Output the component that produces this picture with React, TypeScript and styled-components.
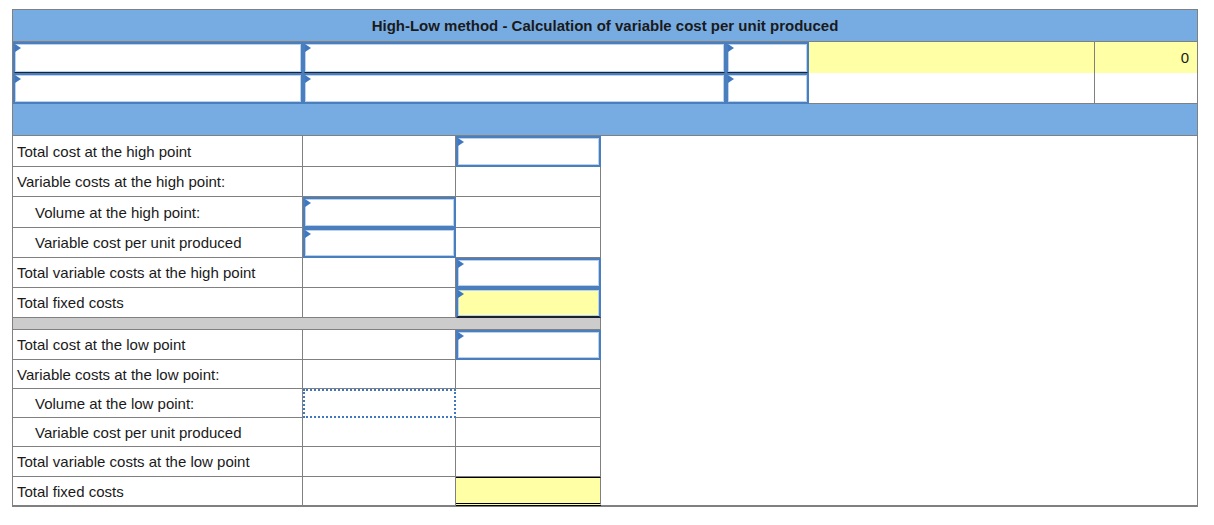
import React from "react";
import styled, { createGlobalStyle, css } from "styled-components";

const Global = createGlobalStyle`
  body { margin: 0; background: #fff; font-family: "Liberation Sans", Arial, sans-serif; }
`;

const Sheet = styled.div`
  margin: 9px 0 0 12px;
  width: 1186px;
  border: 1px solid #808080;
  border-right-width: 1px;
  box-sizing: border-box;
`;

const Header = styled.div`
  height: 31px;
  background: #77ace3;
  border-bottom: 1px solid #808080;
  display: flex;
  align-items: center;
  justify-content: center;
  font-weight: bold;
  font-size: 15px;
  color: #1a1a1a;
`;

const Band = styled.div`
  height: 31px;
  background: #77ace3;
  border-bottom: 1px solid #808080;
`;

const TopGrid = styled.div`
  display: grid;
  grid-template-columns: 290px 423px 83px 286px 1fr;
  grid-auto-rows: 31px;
`;

const LowGrid = styled.div`
  display: grid;
  grid-template-columns: 290px 153px 145px 1fr;
`;

const Cell = styled.div<{ $h?: number; $yellow?: boolean; $indent?: boolean; $last?: boolean; $right?: boolean; $noRight?: boolean }>`
  position: relative;
  box-sizing: border-box;
  height: ${(p) => p.$h ?? 30}px;
  border-bottom: 1px solid #808080;
  border-right: ${(p) => (p.$noRight ? "none" : "1px solid #808080")};
  background: ${(p) => (p.$yellow ? "#ffffa6" : "#fff")};
  font-size: 15px;
  color: #1a1a1a;
  display: flex;
  align-items: center;
  padding-left: ${(p) => (p.$indent ? 22 : 4)}px;
  padding-right: 8px;
  justify-content: ${(p) => (p.$right ? "flex-end" : "flex-start")};
`;

const Blank = styled.div<{ $h?: number; $bottom?: boolean }>`
  height: ${(p) => p.$h ?? 30}px;
  box-sizing: border-box;
  border-bottom: ${(p) => (p.$bottom ? "1px solid #808080" : "none")};
`;

const Input = styled.div<{ $h?: number; $yellow?: boolean; $flag?: boolean; $dotted?: boolean; $thickBottom?: boolean }>`
  position: relative;
  box-sizing: border-box;
  height: ${(p) => p.$h ?? 30}px;
  background: ${(p) => (p.$yellow ? "#ffffa6" : "#fff")};
  ${(p) =>
    p.$dotted
      ? css`border: 2px dotted #3f78c0;`
      : css`
          border: 2px solid #4a7ebd;
          box-shadow: inset 0 0 0 1px #b8d2f0;
        `}
  ${(p) => p.$thickBottom && css`border-bottom-color: #1a2230;`}
  ${(p) =>
    p.$flag &&
    css`
      &::before {
        content: "";
        position: absolute;
        left: 0;
        top: 0;
        border-top: 4px solid transparent;
        border-bottom: 4px solid transparent;
        border-left: 6px solid #3f78c0;
      }
    `}
`;

const Gray = styled.div`
  grid-column: 1 / 4;
  height: 12px;
  background: #cccccc;
  border-bottom: 1px solid #808080;
  border-right: 1px solid #808080;
  box-sizing: border-box;
`;

const YellowBottom = styled(Cell)`
  border-bottom: 3px double #000;
  border-top: 1px solid #000;
`;

type Row = { label: string; indent?: boolean; mid: "in" | "plain" | "dotted"; right: "in" | "plain" | "inYellow" | "yellow"; h: number };

const high: Row[] = [
  { label: "Total cost at the high point", mid: "plain", right: "in", h: 31 },
  { label: "Variable costs at the high point:", mid: "plain", right: "plain", h: 30 },
  { label: "Volume at the high point:", indent: true, mid: "in", right: "plain", h: 31 },
  { label: "Variable cost per unit produced", indent: true, mid: "in", right: "plain", h: 30 },
  { label: "Total variable costs at the high point", mid: "plain", right: "in", h: 30 },
  { label: "Total fixed costs", mid: "plain", right: "inYellow", h: 30 },
];
const low: Row[] = [
  { label: "Total cost at the low point", mid: "plain", right: "in", h: 30 },
  { label: "Variable costs at the low point:", mid: "plain", right: "plain", h: 29 },
  { label: "Volume at the low point:", indent: true, mid: "dotted", right: "plain", h: 29 },
  { label: "Variable cost per unit produced", indent: true, mid: "plain", right: "plain", h: 29 },
  { label: "Total variable costs at the low point", mid: "plain", right: "plain", h: 30 },
  { label: "Total fixed costs", mid: "plain", right: "yellow", h: 29 },
];

function renderRow(r: Row, i: number, isLast: boolean) {
  const mid =
    r.mid === "plain" ? <Cell $h={r.h} /> : <Input $h={r.h} $flag={r.mid === "in"} $dotted={r.mid === "dotted"} />;
  let right: React.ReactNode;
  if (r.right === "plain") right = <Cell $h={r.h} />;
  else if (r.right === "yellow") right = <YellowBottom $h={r.h} $yellow />;
  else right = <Input $h={r.h} $flag $yellow={r.right === "inYellow"} $thickBottom={r.right === "inYellow"} />;
  return (
    <React.Fragment key={r.label + i}>
      <Cell $h={r.h} $indent={r.indent}>{r.label}</Cell>
      {mid}
      {right}
      <Blank $h={r.h} $bottom={isLast} />
    </React.Fragment>
  );
}

export default function App() {
  return (
    <>
      <Global />
      <Sheet>
        <Header>High-Low method - Calculation of variable cost per unit produced</Header>
        <TopGrid>
          <Input $h={32} $flag $thickBottom />
          <Input $h={32} $flag $thickBottom />
          <Input $h={32} $flag $thickBottom />
          <Cell $h={32} $yellow />
          <Cell $h={32} $yellow $right $noRight>0</Cell>
          <Input $h={31} $flag />
          <Input $h={31} $flag />
          <Input $h={31} $flag />
          <Cell $h={31} />
          <Cell $h={31} $noRight />
        </TopGrid>
        <Band />
        <LowGrid>
          {high.map((r, i) => renderRow(r, i, false))}
          <Gray />
          <Blank $h={12} />
          {low.map((r, i) => renderRow(r, i, i === low.length - 1))}
        </LowGrid>
      </Sheet>
    </>
  );
}
